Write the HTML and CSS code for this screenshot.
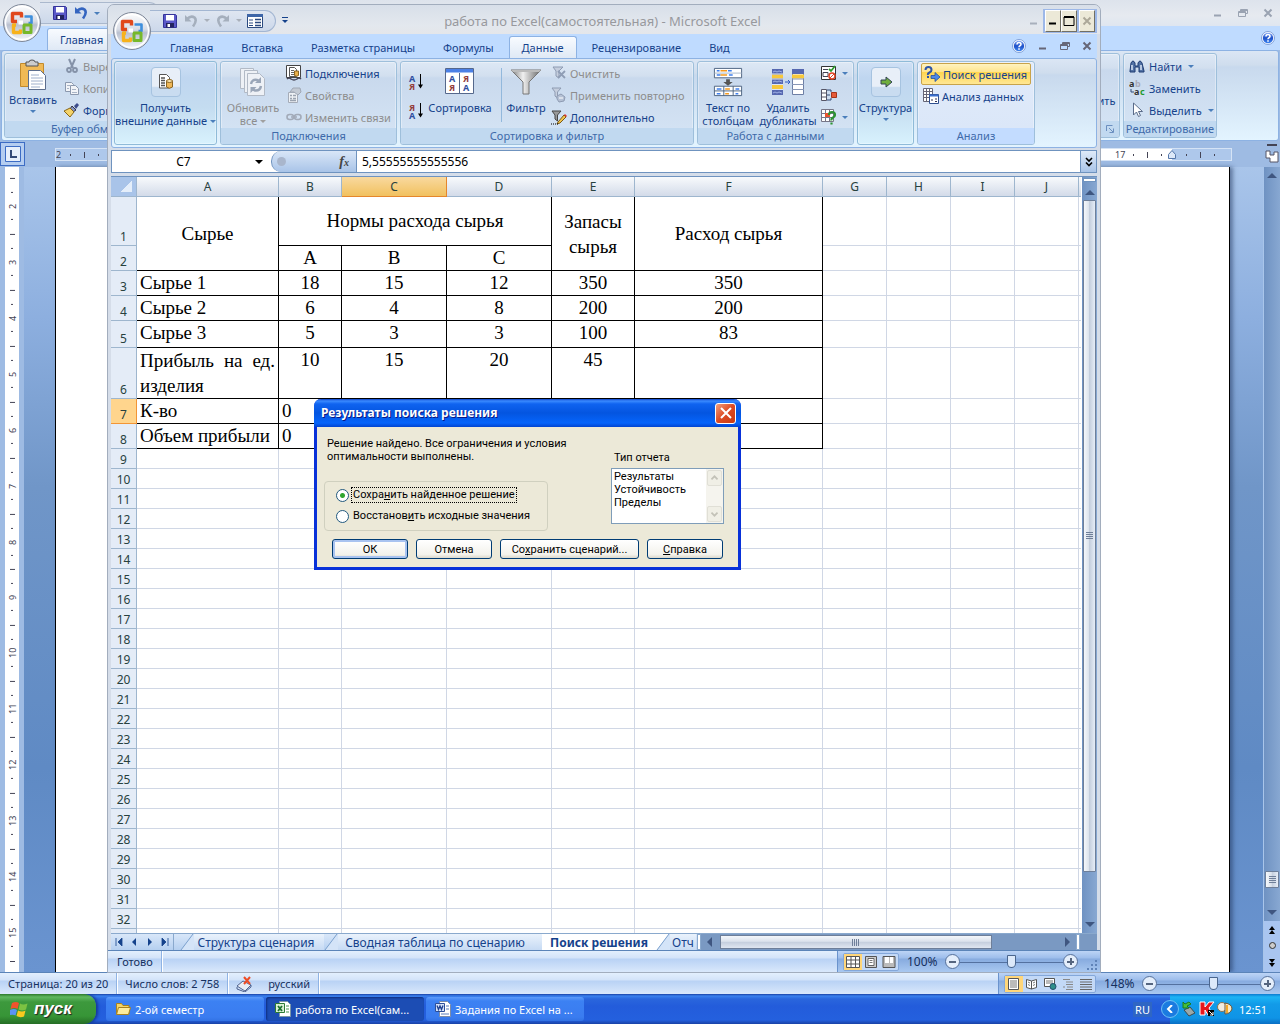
FILE: index.html
```html
<!DOCTYPE html>
<html lang="ru">
<head>
<meta charset="utf-8">
<title>Поиск решения</title>
<link rel="stylesheet" href="styles.css">
</head>
<body>
<svg class="sprite" aria-hidden="true">
  <defs>
    <linearGradient id="gOrb" x1="0" y1="0" x2="0" y2="1"><stop offset="0" stop-color="#fff"/><stop offset=".45" stop-color="#d9dde6"/><stop offset=".55" stop-color="#b9c0cf"/><stop offset="1" stop-color="#f7f9fc"/></linearGradient>
    <linearGradient id="gFunnel" x1="0" y1="0" x2="1" y2="0"><stop offset="0" stop-color="#777"/><stop offset=".4" stop-color="#f0f0f0"/><stop offset="1" stop-color="#666"/></linearGradient>
    <linearGradient id="gBall" x1="0" y1="0" x2="0" y2="1"><stop offset="0" stop-color="#7fa5f5"/><stop offset=".5" stop-color="#1e50c8"/><stop offset="1" stop-color="#3f86f0"/></linearGradient>
  </defs>
  <symbol id="office" viewBox="0 0 40 40">
    <circle cx="20" cy="20" r="18.5" fill="url(#gOrb)" stroke="#7d8798"/>
    <circle cx="20" cy="20" r="16.500" fill="none" stroke="#fff" stroke-width="1.500"/>
    <g fill="none" stroke-width="3.400" stroke-linejoin="round">
      <path d="M15 18.500h-4.500v-8h9v4" stroke="#e0481c"/>
      <path d="M22.500 13.500h7v6.500h-3" stroke="#3f8fdc" stroke-width="2.600"/>
      <path d="M14 22h-2.500v7.500h7v-3" stroke="#f7b21c"/>
      <path d="M22 22h7v7.500h-7z" stroke="#76b82a" stroke-width="3"/>
    </g>
    <path d="M16.500 17.500h4.500v4h-4.500z" fill="#fff"/>
  </symbol>
  <symbol id="save" viewBox="0 0 16 16"><path d="M1.500 1.500h12l1 1v12h-13z" fill="#5a58c8" stroke="#34349a"/><path d="M4 2h8v5.500h-8z" fill="#fff"/><path d="M4 10h8v4.500h-8z" fill="#23235e"/><path d="M5.500 11h2.500v3h-2.500z" fill="#fff"/></symbol>
  <symbol id="undo" viewBox="0 0 16 16"><path d="M2 2v6.500h6.500z" fill="currentColor"/><path d="M4 6q4-4 7.500-1.500q3 3-1.500 9" fill="none" stroke="currentColor" stroke-width="2.600"/></symbol>
  <symbol id="redo" viewBox="0 0 16 16"><path d="M14 2v6.500h-6.500z" fill="currentColor"/><path d="M12 6q-4-4-7.500-1.500q-3 3 1.500 9" fill="none" stroke="currentColor" stroke-width="2.600"/></symbol>
  <symbol id="form" viewBox="0 0 16 14"><path d="M.5.5h15v13h-15z" fill="#fff" stroke="#2b4a80"/><path d="M0 0h16v3h-16z" fill="#3e66a8"/><path d="M2 6h4M2 9h4M2 11.500h4" stroke="#2b4a80"/><path d="M8 5.500h6M8 8.500h6M8 11.500h6" stroke="#2b4a80" stroke-width="1.500"/></symbol>
  <symbol id="help" viewBox="0 0 14 14"><circle cx="7" cy="7" r="6.500" fill="#fff" stroke="#7f9fd8"/><circle cx="7" cy="7" r="5.200" fill="url(#gBall)"/><path d="M5 5.500q0-2 2-2t2 1.800q0 1-1 1.500t-1 1.400M7 9.200v1.500" fill="none" stroke="#fff" stroke-width="1.600"/></symbol>
  <symbol id="min" viewBox="0 0 10 10"><path d="M1 7.500h7" stroke="currentColor" stroke-width="2"/></symbol>
  <symbol id="restore" viewBox="0 0 10 10"><path d="M2.500 3.500v-2h7v4h-2M.5 3.500h7v5h-7zM.5 4.500h7M2.500 2.500h7" fill="none" stroke="currentColor"/></symbol>
  <symbol id="close" viewBox="0 0 10 10"><path d="M1.500 1.500l7 7M8.500 1.500l-7 7" stroke="currentColor" stroke-width="2"/></symbol>
  <symbol id="getdata" viewBox="0 0 16 16"><path d="M1.500.5h7l3 3v10.500h-10z" fill="#fff" stroke="#555"/><path d="M3 4h4M3 6.500h4M3 9h4M3 11.500h4" stroke="#555" stroke-width="1.500"/><path d="M8.500 7v6q3 2.500 6 0v-6z" fill="#efb757" stroke="#8a6420"/><ellipse cx="11.500" cy="7" rx="3" ry="1.500" fill="#fbe3ae" stroke="#8a6420"/></symbol>
  <symbol id="conn" viewBox="0 0 16 16"><path d="M.5.5h14v12h-14z" fill="#fff" stroke="#444"/><path d="M3.500 2.500h5l2 2v7h-7z" fill="#fff" stroke="#555"/><path d="M5 5.500h3M5 7.500h3M5 9.500h3" stroke="#666"/><path d="M8.500 6v4.500q2 1.500 4 0v-4.500z" fill="#e8b04c" stroke="#8a6420"/><path d="M1 14q2-2 4 0q3 2 6 0q2-2 4 0" fill="none" stroke="#445" stroke-width="1.500"/></symbol>
  <symbol id="refresh" viewBox="0 0 28 30"><g fill="#eef1f6" stroke="#b2bac6"><path d="M1.500 1.500h13v20h-13z"/><path d="M5.500 3.500h13v22h-13z"/><path d="M8.500 6.500h12l5 5v17h-17z"/></g><path d="M12 17q1-5 6-4l2 1M22 19q-1 5-6 4.500l-3-1.500" fill="none" stroke="#9aa6b8" stroke-width="2.500"/><path d="M22 10v6h-6zM11.500 26v-6h6z" fill="#9aa6b8"/></symbol>
  <symbol id="props" viewBox="0 0 16 16"><path d="M2.500 5.500h9v10h-9z" fill="#eef1f5" stroke="#a5acb8"/><path d="M4 8.500h2M4 11.500h2M7 8.500h3M7 11.500h3M4 13.500h6" stroke="#9aa3b0" stroke-width="1.500"/><path d="M4 5l3-4h7l1 4-3 3-4-3z" fill="#c3cad4" stroke="#a0a8b5"/></symbol>
  <symbol id="links" viewBox="0 0 16 16"><g fill="none" stroke="#a2aab8" stroke-width="1.600"><rect x="1" y="5.500" width="6.500" height="5" rx="2.500"/><rect x="8.500" y="5.500" width="6.500" height="5" rx="2.500"/><path d="M5 8h6"/></g></symbol>
  <symbol id="funnel" viewBox="0 0 32 28"><path d="M1 2h30l-12 12v12h-6v-12z" fill="url(#gFunnel)" stroke="#777"/><path d="M1 2h30l-2 2h-26z" fill="#bbb"/></symbol>
  <symbol id="fclear" viewBox="0 0 16 16"><path d="M2 2h10l-4 4v7l-3-2v-5z" fill="#c5cede" stroke="#8e9bb2"/><path d="M7 6l7 7M14 6l-7 7" stroke="#8f9db5" stroke-width="1.800"/></symbol>
  <symbol id="fagain" viewBox="0 0 16 16"><path d="M1 1h9l-3.500 4v6l-2.500-2v-4z" fill="#c5cede" stroke="#8e9bb2"/><path d="M6 9l4-2 4 3-1 4-5 1-2-3z" fill="#b5c1d5" stroke="#8e9bb2"/><path d="M8 11h4" stroke="#fff"/></symbol>
  <symbol id="fadv" viewBox="0 0 16 16"><path d="M1 2h9l-3.500 4v6l-2.500-2v-4z" fill="#999" stroke="#444"/><path d="M7 13l6-7 2 2-6 6-3 1z" fill="#f2c44c" stroke="#7a5a18"/><path d="M13 6l2 2 1-1-2-2z" fill="#d33"/><path d="M0 15h8" stroke="#000" stroke-dasharray="1 1"/></symbol>
  <symbol id="cols" viewBox="0 0 32 32"><g fill="#fff" stroke="#4b617f"><path d="M1.500 1.500h29v10h-29zM1.500 20.500h29v10h-29zM1.500 25.500h29M11.500 20.500v10M21.500 20.500v10"/></g><path d="M1.500 6.500h29" stroke="#a8b6ca"/><path d="M4 4h3M16 4h4M4 8.500h4M17 8.500h4" stroke="#3f80ee" stroke-width="1.500"/><path d="M8 4h7M8 8.500h7M13 23.500h5M13 28.500h4" stroke="#f59a1e" stroke-width="1.500"/><path d="M4 23.500h5M4 28.500h4M24 23.500h4M24 28.500h3" stroke="#3f80ee" stroke-width="1.500"/><path d="M14 13h4v3h3l-5 4-5-4h3z" fill="#555"/></symbol>
  <symbol id="dedupe" viewBox="0 0 34 28"><path d="M1 1h11v26h-11z" fill="#5668b0"/><path d="M1 6.500h11v4h-11zM1 17h11v4h-11z" fill="#f7c83c"/><path d="M1 6h11M1 11h11M1 16.500h11M1 21.500h11" stroke="#dfe6f5"/><path d="M2 4l2-1 2 1 2-1 3 1M2 14l2-1 2 1 2-1 3 1M2 25l2-1 2 1 2-1 3 1" fill="none" stroke="#9fb0e6"/><path d="M14 14h4M17 12l2 2-2 2" fill="none" stroke="#2d5bc4"/><path d="M21.500 1.500h11v25h-11z" fill="#fff" stroke="#6d7fa5"/><path d="M21 1h12v5h-12z" fill="#5668b0"/><path d="M21 6.500h12v4h-12z" fill="#f7c83c"/><path d="M21 11h12M21 16.500h12M21 21.500h12" stroke="#8796b6"/></symbol>
  <symbol id="valid" viewBox="0 0 16 16"><path d="M.5 1.500h14v13h-14z" fill="#fff" stroke="#333"/><path d="M2 4.500h5M2 7.500h5v4h-5z" fill="none" stroke="#445"/><path d="M8 4l2 2 4-5" fill="none" stroke="#2b9a2b" stroke-width="1.800"/><circle cx="11" cy="11" r="3" fill="#fff" stroke="#e04423" stroke-width="1.500"/><path d="M9 13l4-4" stroke="#e04423"/></symbol>
  <symbol id="consol" viewBox="0 0 16 16"><path d="M.5 2.500h5v11h-5zM.5 6h5M.5 10h5" fill="#fff" stroke="#556"/><path d="M6 3h4v2M6 13h4v-2M6 8h3" fill="none" stroke="#334a77"/><path d="M10.500 5.500h5v5h-5z" fill="#e55a38" stroke="#a5341b"/></symbol>
  <symbol id="whatif" viewBox="0 0 16 16"><path d="M.5.5h12v12h-12zM4.500.5v12M8.500.5v12M.5 4.500h12M.5 8.500h12" fill="#fff" stroke="#778"/><path d="M4 4h5v4h-5z" fill="#e8542f"/><path d="M8 6q0-3 3-3t3 3q0 1.500-2 2.500t-1.500 3M10.500 13.500v2" fill="none" stroke="#2d9332" stroke-width="2.200"/></symbol>
  <symbol id="garrow" viewBox="0 0 16 16"><path d="M3 6h5v-3l6 5-6 5v-3h-5z" fill="#6fae3e" stroke="#345"/></symbol>
  <symbol id="solver" viewBox="0 0 16 16"><path d="M1.500 4q0-3 3-3t3 3q0 1.500-2 2.500t-1.500 2.500M4 10v2" fill="none" stroke="#2f55a8" stroke-width="2"/><path d="M7 9.500h4v-3l5 4.500-5 4.500v-3h-4z" fill="#4f88e6" stroke="#2450a0" stroke-width=".8"/></symbol>
  <symbol id="analysis" viewBox="0 0 16 16"><path d="M.5.5h9v13h-9zM3.500.5v13M6.500.5v13M.5 3.500h9M.5 6.500h9M.5 9.500h9" fill="#fff" stroke="#667"/><path d="M6.500 6.500h9v9h-9z" fill="#fff" stroke="#2f4f8f"/><path d="M6.500 7.500h9" stroke="#3a6fd0" stroke-width="2"/><path d="M8 12h2M12 11h2M12 13.500h2" stroke="#335"/></symbol>
  <symbol id="paste" viewBox="0 0 28 32"><path d="M1.500 4.500h23v23h-23z" fill="#f0b955" stroke="#c28a2c"/><path d="M7 3h3q0-2 3-2t3 2h3v4h-12z" fill="#ccc" stroke="#555"/><path d="M9.500 11.500h12l5 5v14h-17z" fill="#fff" stroke="#5c6e8e"/><path d="M12 16h8M12 19h12M12 22h12M12 25h12M12 28h9" stroke="#9fb0cc"/></symbol>
  <symbol id="cut" viewBox="0 0 16 16"><path d="M5 1l4 9M11 1l-4 9" stroke="#8592a8" stroke-width="2"/><circle cx="5" cy="12" r="2" fill="none" stroke="#8592a8" stroke-width="1.800"/><circle cx="11" cy="12" r="2" fill="none" stroke="#8592a8" stroke-width="1.800"/></symbol>
  <symbol id="copy" viewBox="0 0 16 16"><g fill="#f2f4f8" stroke="#8b98ae"><path d="M1.500 2.500h6l2 2v7h-8z"/><path d="M6.500 5.500h5l3 3v6h-8z"/></g><path d="M3 5.500h3M3 8.500h2M8 9.500h4M8 12.500h5" stroke="#a9b4c6"/></symbol>
  <symbol id="brush" viewBox="0 0 16 16"><path d="M10 4l3-3 2 2-3 4z" fill="#3c4d8c"/><path d="M8 4l4 4-3 2-3-3z" fill="#8593c0" stroke="#334"/><path d="M6 6l4 4-4 5-6-6z" fill="#f5d36a" stroke="#876518"/></symbol>
  <symbol id="find" viewBox="0 0 16 16"><path d="M2 5q2-4 4 0v3h3v-3q2-4 4 0l2 8v1h-5v-5h-4v5h-5v-1z" fill="#5272a5" stroke="#1f3c72"/><path d="M3 7v5M12 7v5" stroke="#dbe6f6" stroke-width="1.500"/></symbol>
  <symbol id="cursor" viewBox="0 0 16 16"><path d="M4.500 1v12l3-3 2 4.500 2-1-2-4h4z" fill="#fff" stroke="#5b6c8a"/></symbol>
  <symbol id="launch" viewBox="0 0 8 8"><path d="M.5 6v-5.500h6M3 3l4 4M7.500 3.500v4h-4" fill="none" stroke="#6b8fc0"/></symbol>
  <symbol id="spell" viewBox="0 0 16 16"><path d="M1 10l6-5 8 4-6 6z" fill="#e8ecf4" stroke="#4f6390"/><path d="M1 11v2l8 3 6-5v-2" fill="none" stroke="#4f6390"/><path d="M8 1l6 7M14 1l-6 7" stroke="#ee4b24" stroke-width="2"/></symbol>
  <symbol id="vgrid" viewBox="0 0 14 12"><path d="M.5.5h13v11h-13zM.5 4h13M.5 8h13M5 .5v11M9.500.5v11" fill="#fff" stroke="#555"/></symbol>
  <symbol id="vpage" viewBox="0 0 14 12"><path d="M1.500.5h11v11h-11z" fill="#ccc" stroke="#555"/><path d="M4 2.500h6v7h-6z" fill="#fff" stroke="#666"/><path d="M5.500 4.500h3M5.500 6.500h3" stroke="#777"/></symbol>
  <symbol id="vbreak" viewBox="0 0 14 12"><path d="M1 .5h12v11h-12z" fill="#bbb" stroke="#555"/><path d="M3 1h4v6h-4zM8 1h3v6h-3z" fill="#fff"/></symbol>
  <symbol id="vdoc" viewBox="0 0 14 12"><path d="M1.500.5h10v11h-10z" fill="#fff" stroke="#555"/><path d="M3 3h7M3 5h7M3 7h7M3 9h7" stroke="#777"/></symbol>
  <symbol id="vread" viewBox="0 0 14 12"><path d="M1.500 1.500l5 1.500v8l-5-1.500zM11.500 1.500l-5 1.500v8l5-1.500z" fill="#fff" stroke="#555"/><path d="M3 4l2 1M3 6.500l2 1M10 4l-2 1M10 6.500l-2 1" stroke="#777"/></symbol>
  <symbol id="vweb" viewBox="0 0 14 12"><path d="M1.500.5h10v8h-10z" fill="#fff" stroke="#555"/><path d="M3 3h7M3 5h7" stroke="#777"/><circle cx="10" cy="8.500" r="3" fill="#2f8f8a" stroke="#24506f"/></symbol>
  <symbol id="voutl" viewBox="0 0 14 12"><path d="M2 1.500h7M5 4h7M5 6.500h7M2 9h2M6 9h6M5 11.500h7" stroke="#888"/></symbol>
  <symbol id="vlines" viewBox="0 0 14 12"><path d="M1 1.500h12M1 4h12M1 6.500h12M1 9h12M1 11.500h12" stroke="#666"/></symbol>
  <symbol id="flag" viewBox="0 0 18 18"><path d="M2 3q4-2 7 0l-1.500 6q-3-2-7 0z" fill="#f0532d"/><path d="M10 3.500q3 2 7.500 0l-1.500 6q-4 2-7.500 0z" fill="#7cc242"/><path d="M0 10q4-2 7 0l-1.500 5.500q-2.500-1.500-7 0z" fill="#5b93f5"/><path d="M8 10.500q4 2 7.500 0l-1.500 6q-4 1.500-7.500-.500z" fill="#fbc91f"/></symbol>
  <symbol id="folder" viewBox="0 0 16 16"><path d="M1.500 13v-10.500h5l1.500 2h6v8.500z" fill="#f5d568" stroke="#a8811f"/><path d="M1.500 13.500l2-7h12l-2 7z" fill="#fdeb9c" stroke="#a8811f"/></symbol>
  <symbol id="xls" viewBox="0 0 16 16"><path d="M4.500.5h8l3 3v12h-11z" fill="#fff" stroke="#7c98a8"/><path d="M11 5h3M11 8h3M11 11h3" stroke="#4a9850"/><path d="M.5 2.500h9v9h-9z" fill="#d9f0d4" stroke="#2c7a35"/><path d="M3 5l4 5M7 5l-4 5" stroke="#1d7030" stroke-width="1.800"/></symbol>
  <symbol id="doc" viewBox="0 0 16 16"><path d="M4.500.5h8l3 3v12h-11z" fill="#fff" stroke="#7c8ca8"/><path d="M11 5h3M11 8h3M6 13h8" stroke="#5b7dbb"/><path d="M.5 2.500h9v8h-9z" fill="#d5e2f8" stroke="#2c4f9a"/><path d="M2 4.500l1.500 4L5 5l1.500 3.500L8 4.500" fill="none" stroke="#1d3f90" stroke-width="1.300"/></symbol>
  <symbol id="device" viewBox="0 0 16 16"><path d="M3 9l6-3 5 6-6 3z" fill="#9aa8a8" stroke="#3d4a4c"/><path d="M2 1v6h6l-2-2 4-2-2-2-4 2z" fill="#47c13a" stroke="#1c7a1c"/></symbol>
  <symbol id="kav" viewBox="0 0 16 16"><path d="M1 1h5v5l4-5h5l-5 6 4 7h-5l-3-5v5h-5z" fill="#e8161b" stroke="#fff"/><path d="M9 9h6v6h-6z" fill="#000"/><path d="M10 10l4 4M14 11v3h-3" fill="none" stroke="#fff"/></symbol>
  <symbol id="shell" viewBox="0 0 16 16"><circle cx="5" cy="6" r="4.500" fill="#f1ecdf" stroke="#8b7350"/><path d="M8 2q7 1 7 6q-2 5-7 5z" fill="#f8e9c5" stroke="#6b5536"/><path d="M10 4v8" stroke="#f3a927" stroke-width="2"/></symbol>
</svg>

<main class="desktop">
  <section class="word" aria-label="Microsoft Word">
    <svg class="orb"><use href="#office"/></svg>
    <header class="word-title">
      <div class="qat word-qat">
        <button class="ico" aria-label="Сохранить"><svg class="i16"><use href="#save"/></svg></button>
        <button class="ico undo" aria-label="Отменить"><svg class="i16"><use href="#undo"/></svg></button>
        <i class="caret"></i>
      </div>
      <div class="winctl faded">
        <button class="ico" aria-label="Свернуть"><svg class="i10"><use href="#min"/></svg></button>
        <button class="ico" aria-label="Восстановить"><svg class="i10"><use href="#restore"/></svg></button>
        <button class="ico" aria-label="Закрыть"><svg class="i10"><use href="#close"/></svg></button>
      </div>
    </header>
    <nav class="tabs word-tabs">
      <button class="tab on">Главная</button>
      <button class="ico help" aria-label="Справка"><svg class="i14"><use href="#help"/></svg></button>
    </nav>
    <div class="ribbon word-ribbon">
      <div class="group clip">
        <div class="tools">
          <button class="big"><svg class="pasteico"><use href="#paste"/></svg><span>Вставить</span><i class="caret"></i></button>
          <div class="col">
            <button class="small off"><svg class="i16"><use href="#cut"/></svg>Вырезать</button>
            <button class="small off"><svg class="i16"><use href="#copy"/></svg>Копировать</button>
            <button class="small"><svg class="i16"><use href="#brush"/></svg>Формат</button>
          </div>
        </div>
        <h2 class="cap">Буфер обмена</h2>
      </div>
      <div class="group styles">
        <div class="tools"><button class="big"><span class="gap36"></span><span>Изменить</span><i class="caret"></i></button></div>
        <h2 class="cap"><svg class="i8"><use href="#launch"/></svg></h2>
      </div>
      <div class="group edit">
        <div class="tools"><div class="col">
          <button class="small"><svg class="i16"><use href="#find"/></svg>Найти<i class="caret"></i></button>
          <button class="small"><svg class="i16" viewBox="0 0 16 16"><text x="0" y="7" class="glyph dark">a</text><text x="6" y="7" class="glyph pale">b</text><text x="5" y="15" class="glyph dark">a</text><text x="11" y="15" class="glyph green">c</text><path d="M2 9v3h3" fill="none" stroke="#334a77"/></svg>Заменить</button>
          <button class="small"><svg class="i16"><use href="#cursor"/></svg>Выделить<i class="caret"></i></button>
        </div></div>
        <h2 class="cap">Редактирование</h2>
      </div>
    </div>
    <div class="hruler">
      <button class="tabstop" aria-label="Табуляция"><svg class="i16" viewBox="0 0 16 16"><path d="M.5.5h15v15h-15z" fill="#e6effb" stroke="#3c6cc4"/><path d="M6 4v7h6" fill="none" stroke="#334a77" stroke-width="2"/></svg></button>
      <div class="hscale">
        <span class="hleft">2</span>
        <span class="hnum">17</span>
        <span class="hright"><svg class="i10"><path d="M1.500 9.500v-4l3.500-4 3.500 4v4z" fill="#dce8f8" stroke="#5577aa"/></svg></span>
      </div>
      <div class="rulerbtn"><i></i><svg class="i14" viewBox="0 0 14 14"><path d="M1 1h4v4h4v-3h4v10h-8v-4h-4z" fill="#fff" stroke="#556"/></svg></div>
    </div>
    <div class="word-work">
      <div class="vruler">
        <b></b><span>2</span><span>3</span><span>4</span><span>5</span><span>6</span><span>7</span><span>8</span><span>9</span><span>10</span><span>11</span><span>12</span><span>13</span><span>14</span><span>15</span><b class="tail"></b>
      </div>
      <div class="canvas"><div class="page"></div></div>
      <div class="vbar word-bar">
        <i class="up"></i>
        <div class="track"><div class="thumb lines"></div></div>
        <i class="down"></i>
        <div class="browse"><i class="up"></i><i class="up"></i><b></b><i class="down"></i><i class="down"></i></div>
      </div>
    </div>
    <footer class="status word-status">
      <span>Страница: 20 из 20</span><span>Число слов: 2 758</span>
      <span class="lang"><svg class="i16"><use href="#spell"/></svg>русский</span>
      <div class="right">
        <div class="views">
          <button class="ico on" aria-label="Разметка"><svg class="view"><use href="#vdoc"/></svg></button>
          <button class="ico" aria-label="Чтение"><svg class="view"><use href="#vread"/></svg></button>
          <button class="ico" aria-label="Веб"><svg class="view"><use href="#vweb"/></svg></button>
          <button class="ico" aria-label="Структура"><svg class="view"><use href="#voutl"/></svg></button>
          <button class="ico" aria-label="Черновик"><svg class="view"><use href="#vlines"/></svg></button>
        </div>
        <span class="pct">148%</span>
        <button class="zoom minus" aria-label="Уменьшить"></button>
        <input class="range" type="range" min="0" max="100" value="55" aria-label="Масштаб документа">
        <button class="zoom plus" aria-label="Увеличить"></button>
      </div>
    </footer>
  </section>

  <section class="excel" aria-label="Microsoft Excel">
    <svg class="orb"><use href="#office"/></svg>
    <header class="xl-title">
      <div class="qat">
        <button class="ico" aria-label="Сохранить"><svg class="i16"><use href="#save"/></svg></button>
        <button class="ico dim" aria-label="Отменить"><svg class="i16"><use href="#undo"/></svg></button><i class="caret dim"></i>
        <button class="ico dim" aria-label="Вернуть"><svg class="i16"><use href="#redo"/></svg></button><i class="caret dim"></i>
        <button class="ico" aria-label="Форма"><svg class="i16"><use href="#form"/></svg></button>
      </div>
      <svg class="more" viewBox="0 0 6 7"><path d="M0 .5h6" stroke="#15428b"/><path d="M0 3h6l-3 3z" fill="#15428b"/></svg>
      <h1>работа по Excel(самостоятельная) - Microsoft Excel</h1>
      <svg class="i10 ghost"><use href="#min"/></svg>
      <div class="classic">
        <button aria-label="Свернуть"><svg class="i10"><use href="#min"/></svg></button>
        <button aria-label="Развернуть"><svg class="i12" viewBox="0 0 12 12"><path d="M1 2h10v8.500h-10z" fill="none" stroke="#000"/><path d="M1 2h10" stroke="#000" stroke-width="2"/></svg></button>
        <button class="x" aria-label="Закрыть"><svg class="i10"><use href="#close"/></svg></button>
      </div>
    </header>
    <nav class="tabs">
      <button class="tab">Главная</button><button class="tab">Вставка</button><button class="tab">Разметка страницы</button><button class="tab">Формулы</button><button class="tab on">Данные</button><button class="tab">Рецензирование</button><button class="tab">Вид</button>
      <div class="winctl">
        <button class="ico" aria-label="Справка"><svg class="i14"><use href="#help"/></svg></button>
        <button class="ico" aria-label="Свернуть книгу"><svg class="i10"><use href="#min"/></svg></button>
        <button class="ico" aria-label="Восстановить книгу"><svg class="i10"><use href="#restore"/></svg></button>
        <button class="ico" aria-label="Закрыть книгу"><svg class="i10"><use href="#close"/></svg></button>
      </div>
    </nav>
    <div class="ribbon">
      <div class="group folded g-get">
        <button class="big"><span class="tile"><svg class="i16"><use href="#getdata"/></svg></span><span>Получить</span><span>внешние данные<i class="caret"></i></span></button>
      </div>
      <div class="group g-conn">
        <div class="tools">
          <button class="big off"><svg class="refico"><use href="#refresh"/></svg><span>Обновить</span><span>все<i class="caret"></i></span></button>
          <div class="col">
            <button class="small"><svg class="i16"><use href="#conn"/></svg>Подключения</button>
            <button class="small off"><svg class="i16"><use href="#props"/></svg>Свойства</button>
            <button class="small off"><svg class="i16"><use href="#links"/></svg>Изменить связи</button>
          </div>
        </div>
        <h2 class="cap">Подключения</h2>
      </div>
      <div class="group g-sort">
        <div class="tools">
          <div class="azcol">
            <button class="ico" aria-label="По возрастанию"><svg class="i16" viewBox="0 0 16 16"><text x="1" y="8" class="glyph blue">А</text><text x="1" y="16" class="glyph red">Я</text><path d="M12.500 0v12" stroke="#000"/><path d="M10 10.500h5l-2.500 4z"/></svg></button>
            <button class="ico" aria-label="По убыванию"><svg class="i16" viewBox="0 0 16 16"><text x="1" y="8" class="glyph red">Я</text><text x="1" y="16" class="glyph blue">А</text><path d="M12.500 0v12" stroke="#000"/><path d="M10 10.500h5l-2.500 4z"/></svg></button>
          </div>
          <button class="big"><svg class="sortico" viewBox="0 0 30 28"><path d="M.5.5h28v25h-28z" fill="#fff" stroke="#55688c"/><path d="M1 1h27v3.500h-27z" fill="#4b80e6"/><path d="M14.500 5v20" stroke="#55688c"/><text x="4" y="14" class="glyph blue">А</text><text x="4" y="23" class="glyph red">Я</text><text x="18" y="14" class="glyph red">Я</text><text x="18" y="23" class="glyph blue">А</text></svg><span>Сортировка</span></button>
          <i class="rule"></i>
          <button class="big narrow"><svg class="funico"><use href="#funnel"/></svg><span>Фильтр</span></button>
          <div class="col">
            <button class="small off"><svg class="i16"><use href="#fclear"/></svg>Очистить</button>
            <button class="small off"><svg class="i16"><use href="#fagain"/></svg>Применить повторно</button>
            <button class="small"><svg class="i16"><use href="#fadv"/></svg>Дополнительно</button>
          </div>
        </div>
        <h2 class="cap">Сортировка и фильтр</h2>
      </div>
      <div class="group g-data">
        <div class="tools">
          <button class="big"><svg class="colico"><use href="#cols"/></svg><span>Текст по</span><span>столбцам</span></button>
          <button class="big"><svg class="dupico"><use href="#dedupe"/></svg><span>Удалить</span><span>дубликаты</span></button>
          <div class="col">
            <button class="small" aria-label="Проверка данных"><svg class="i16"><use href="#valid"/></svg><i class="caret"></i></button>
            <button class="small" aria-label="Консолидация"><svg class="i16"><use href="#consol"/></svg></button>
            <button class="small" aria-label="Анализ что-если"><svg class="i16"><use href="#whatif"/></svg><i class="caret"></i></button>
          </div>
        </div>
        <h2 class="cap">Работа с данными</h2>
      </div>
      <div class="group folded g-str">
        <button class="big"><span class="tile"><svg class="i16"><use href="#garrow"/></svg></span><span>Структура</span><i class="caret"></i></button>
      </div>
      <div class="group lit g-an">
        <div class="tools"><div class="col">
          <button class="small hot"><svg class="i16"><use href="#solver"/></svg>Поиск решения</button>
          <button class="small"><svg class="i16"><use href="#analysis"/></svg>Анализ данных</button>
        </div></div>
        <h2 class="cap">Анализ</h2>
      </div>
    </div>
    <div class="fbar">
      <input class="namebox" value="C7" aria-label="Имя"><i class="caret black"></i>
      <div class="fx"><b></b><em>f<small>x</small></em></div>
      <input class="formula" value="5,55555555555556" aria-label="Строка формул">
      <button class="expand" aria-label="Развернуть строку формул"><svg viewBox="0 0 8 10" width="8" height="10"><path d="M1 1l3 3 3-3M1 5.500l3 3 3-3" fill="none" stroke="#000" stroke-width="1.600"/></svg></button>
    </div>
    <div class="sheet">
      <div class="gridbox">
        <table>
          <colgroup><col class="ch"><col class="ca"><col class="cb"><col class="cc"><col class="cc"><col class="ce"><col class="cf"><col class="cg"><col class="cg"><col class="cg"><col class="cg"><col class="cg"></colgroup>
          <thead><tr><th class="all"></th><th>A</th><th>B</th><th class="sel">C</th><th>D</th><th>E</th><th>F</th><th>G</th><th>H</th><th>I</th><th>J</th><th></th></tr></thead>
          <tbody id="cells">
            <tr class="r1"><th>1</th><td class="k" rowspan="2">Сырье</td><td class="k" colspan="3">Нормы расхода сырья</td><td class="k w" rowspan="2">Запасы сырья</td><td class="k" rowspan="2">Расход сырья</td><td></td><td></td><td></td><td></td><td></td></tr>
            <tr class="r2"><th>2</th><td class="k">А</td><td class="k">В</td><td class="k">С</td><td></td><td></td><td></td><td></td><td></td></tr>
            <tr class="r2"><th>3</th><td class="k l">Сырье 1</td><td class="k">18</td><td class="k">15</td><td class="k">12</td><td class="k">350</td><td class="k">350</td><td></td><td></td><td></td><td></td><td></td></tr>
            <tr class="r2"><th>4</th><td class="k l">Сырье 2</td><td class="k">6</td><td class="k">4</td><td class="k">8</td><td class="k">200</td><td class="k">200</td><td></td><td></td><td></td><td></td><td></td></tr>
            <tr class="r5"><th>5</th><td class="k l">Сырье 3</td><td class="k">5</td><td class="k">3</td><td class="k">3</td><td class="k">100</td><td class="k">83</td><td></td><td></td><td></td><td></td><td></td></tr>
            <tr class="r6"><th>6</th><td class="k l j">Прибыль на ед. изделия</td><td class="k">10</td><td class="k">15</td><td class="k">20</td><td class="k">45</td><td class="k"></td><td></td><td></td><td></td><td></td><td></td></tr>
            <tr class="r2"><th class="sel">7</th><td class="k l">К-во</td><td class="k l">0</td><td class="k"></td><td class="k"></td><td class="k"></td><td class="k"></td><td></td><td></td><td></td><td></td><td></td></tr>
            <tr class="r2"><th>8</th><td class="k l">Объем прибыли</td><td class="k l">0</td><td class="k"></td><td class="k"></td><td class="k"></td><td class="k"></td><td></td><td></td><td></td><td></td><td></td></tr>
          </tbody>
        </table>
      </div>
      <div class="vbar">
        <div class="split"></div>
        <i class="up"></i>
        <div class="track"><div class="thumb lines"></div></div>
        <i class="down"></i>
      </div>
    </div>
    <div class="sheetbar">
      <div class="nav">
        <button class="ico" aria-label="Первый лист"><svg class="i8" viewBox="0 0 8 8"><path d="M1 0v8M7 0v8l-4-4z" fill="#15428b" stroke="#15428b" stroke-width=".8"/></svg></button>
        <button class="ico" aria-label="Предыдущий лист"><svg class="i8" viewBox="0 0 8 8"><path d="M6 0v8l-4-4z" fill="#15428b"/></svg></button>
        <button class="ico" aria-label="Следующий лист"><svg class="i8" viewBox="0 0 8 8"><path d="M2 0v8l4-4z" fill="#15428b"/></svg></button>
        <button class="ico" aria-label="Последний лист"><svg class="i8" viewBox="0 0 8 8"><path d="M7 0v8M1 0v8l4-4z" fill="#15428b" stroke="#15428b" stroke-width=".8"/></svg></button>
      </div>
      <div class="stabs">
        <svg class="slant" viewBox="0 0 14 16"><path d="M1 16L13 0h1v16z" fill="#d4e4f8"/><path d="M1 16L13 0" stroke="#7ba0cd"/></svg><button class="stab t1">Структура сценария</button>
        <svg class="slant" viewBox="0 0 14 16"><path d="M1 16L13 0h1v16z" fill="#d4e4f8"/><path d="M1 16L13 0" stroke="#7ba0cd"/></svg><button class="stab t2">Сводная таблица по сценарию</button>
        <button class="stab on">Поиск решения</button>
        <svg class="slant" viewBox="0 0 14 16"><path d="M0 0h13L1 16h-1z" fill="#fff"/><path d="M1 16L13 0h1v16z" fill="#d4e4f8"/><path d="M1 16L13 0" stroke="#7ba0cd"/></svg><button class="stab last">Отч</button>
      </div>
      <div class="hsplit"></div>
      <div class="hbar"><i class="left"></i><div class="hthumb"><b></b></div><i class="rightarr"></i></div>
      <div class="hsplit"></div><div class="corner"></div>
    </div>
    <footer class="status">
      <span>Готово</span>
      <div class="right">
        <div class="views">
          <button class="ico on" aria-label="Обычный"><svg class="view"><use href="#vgrid"/></svg></button>
          <button class="ico" aria-label="Разметка страницы"><svg class="view"><use href="#vpage"/></svg></button>
          <button class="ico" aria-label="Страничный режим"><svg class="view"><use href="#vbreak"/></svg></button>
        </div>
        <span class="pct">100%</span>
        <button class="zoom minus" aria-label="Уменьшить"></button>
        <input class="range" type="range" min="0" max="100" value="50" aria-label="Масштаб листа">
        <button class="zoom plus" aria-label="Увеличить"></button>
        <svg class="grip" viewBox="0 0 12 12"><path d="M9 1h2v2h-2zM9 5h2v2h-2zM9 9h2v2h-2zM5 5h2v2h-2zM5 9h2v2h-2zM1 9h2v2h-2z" fill="#5f83b8"/></svg>
      </div>
    </footer>
  </section>

  <section class="dialog" role="dialog" aria-labelledby="dt">
    <header><h2 id="dt">Результаты поиска решения</h2><button class="dx" aria-label="Закрыть"><svg viewBox="0 0 12 12" width="12" height="12"><path d="M1 1l10 10M11 1L1 11" stroke="#fff" stroke-width="2"/></svg></button></header>
    <div class="dbody">
      <div class="dmain">
        <div class="dleft">
          <p>Решение найдено. Все ограничения и условия<br>оптимальности выполнены.</p>
          <fieldset>
            <div class="opt"><input type="radio" name="r" id="o1" checked><label for="o1" class="focus">Сохра<u>н</u>ить найденное решение</label></div>
            <div class="opt"><input type="radio" name="r" id="o2"><label for="o2">Восстанов<u>и</u>ть исходные значения</label></div>
          </fieldset>
        </div>
        <div class="dright">
          <label for="rep">Тип отчета</label>
          <div class="listbox">
            <select id="rep" size="4"><option>Результаты</option><option>Устойчивость</option><option>Пределы</option></select>
            <div class="lscroll"><svg viewBox="0 0 15 15"><path d="M4 9l3.500-3.500L11 9" fill="none" stroke="#c3c2b8" stroke-width="2"/></svg><svg viewBox="0 0 15 15"><path d="M4 6l3.500 3.500L11 6" fill="none" stroke="#c3c2b8" stroke-width="2"/></svg></div>
          </div>
        </div>
      </div>
      <div class="dbtns"><button class="def">ОК</button><button>Отмена</button><button class="wide">Со<u>х</u>ранить сценарий...</button><button><u>С</u>правка</button></div>
    </div>
  </section>
</main>

<footer class="taskbar">
  <button class="start"><svg viewBox="0 0 18 18"><use href="#flag"/></svg><span>пуск</span></button>
  <div class="tasks">
    <button><svg class="i16"><use href="#folder"/></svg>2-ой семестр</button>
    <button class="on"><svg class="i16"><use href="#xls"/></svg>работа по Excel(сам...</button>
    <button><svg class="i16"><use href="#doc"/></svg>Задания по Excel на ...</button>
  </div>
  <span class="ru">RU</span>
  <div class="tray">
    <button class="chev" aria-label="Показать значки"><svg viewBox="0 0 8 8" width="8" height="8"><path d="M6 0L2 4l4 4" fill="none" stroke="#fff" stroke-width="2"/></svg></button>
    <svg class="i16"><use href="#device"/></svg><svg class="i16"><use href="#kav"/></svg><svg class="i16"><use href="#shell"/></svg>
    <time>12:51</time>
  </div>
</footer>
<script src="grid.js"></script>
</body>
</html>
```
FILE: grid.js
```js
// Adds the empty rows below the filled part of the sheet.
const body = document.getElementById('cells');
for (let n = 9; n <= 33; n++) {
  const row = document.createElement('tr');
  const label = n < 33 ? n : '';
  row.innerHTML = '<th>' + label + '</th>' + '<td></td>'.repeat(11);
  body.append(row);
}
```
FILE: styles.css
```css
* { box-sizing: border-box; }
body { margin: 0; height: 100vh; display: flex; flex-direction: column; overflow: hidden; font: 11px/13px "Noto Sans", sans-serif; color: #15428b; }
h1, h2, p { margin: 0; font-weight: normal; font-size: inherit; }
button { font: inherit; color: inherit; border: 0; padding: 0; margin: 0; background: none; white-space: nowrap; }
input { font: inherit; margin: 0; }
svg { flex: none; display: block; }
.sprite { position: absolute; width: 0; height: 0; }
.glyph { font: bold 9px "Noto Sans", sans-serif; }
.blue { fill: #2f4f9f; } .red { fill: #943c3c; } .dark { fill: #333; } .pale { fill: #aab; } .green { fill: #1f9a2f; }
.i8 { width: 8px; height: 8px; } .i10 { width: 10px; height: 10px; } .i12 { width: 12px; height: 12px; } .i14 { width: 14px; height: 14px; } .i16 { width: 16px; height: 16px; }
.ico { display: flex; align-items: center; justify-content: center; }
.caret { display: inline-block; flex: none; border: 3px solid transparent; border-top-color: #4a7ebb; border-bottom: 0; }
.caret.dim { border-top-color: #a9b0ba; }
.caret.black { border-width: 4px 4px 0; border-top-color: #000; }
.desktop { position: relative; flex: 1; min-height: 0; overflow: hidden; background: #6f97d0; }
.orb { position: absolute; width: 40px; height: 40px; z-index: 2; }

/* window chrome shared by both programs */
.qat { display: flex; align-items: center; height: 22px; gap: 5px; padding: 0 12px 0 12px; border: 1px solid #a3b6d2; border-left: 0; border-radius: 0 12px 12px 0; background: linear-gradient(#dfe6f1, #ccd8ea); }
.undo { color: #3565c0; }
.ico.dim { color: #a5afbd; }
.winctl { display: flex; align-items: center; gap: 13px; margin-left: auto; color: #667; }
.tabs { display: flex; align-items: flex-end; gap: 2px; height: 24px; background: #bfdbff; }
.tab { height: 22px; padding: 0 12px; border: 1px solid transparent; border-bottom: 0; border-radius: 3px 3px 0 0; }
.tab.on { background: linear-gradient(#f8fbff, #dfe9f5); border-color: #8db2e3; }
.ribbon { display: flex; gap: 3px; height: 90px; padding: 2px; border: 1px solid #8db2e3; border-radius: 3px; background: linear-gradient(#dbe6f4 0, #cfdded 14px, #c8d9ed 16px, #e3f4ff); }
.group { display: flex; flex-direction: column; flex: none; overflow: hidden; border: 1px solid #9ebfdb; border-radius: 3px; box-shadow: inset 0 0 0 1px rgba(255,255,255,.35); background: linear-gradient(#dde8f5 0, #d2dfef 14px, #c9d9ed 16px, #d6e5f5); }
.tools { display: flex; flex: 1; min-height: 0; }
.cap { height: 16px; line-height: 15px; text-align: center; color: #3e6aaa; background: #c1d9f0; }
.col { display: flex; flex-direction: column; }
.small { display: flex; align-items: center; gap: 3px; height: 22px; padding: 0 3px; text-align: left; }
.small .caret { margin-left: 2px; }
.off { color: #8d8d8d; }
.off .caret { border-top-color: #a0a0a0; }
.big { display: flex; flex-direction: column; align-items: center; height: 66px; width: 60px; }
.big > svg, .big > .tile, .gap36 { margin: 5px 0 4px; height: 30px; }
.big > .caret { margin-top: 4px; }
.big span > .caret { margin: 0 0 2px 3px; }
.big > .tile { display: flex; justify-content: center; align-items: center; width: 30px; border: 1px solid #a6c3e0; border-radius: 4px; background: linear-gradient(#e8eff8 65%, #c9dcf0 70%); }
.folded { align-items: center; border-color: #8fbbd8; background: linear-gradient(#cfe0f5 0, #bfd6f0 16px, #c4dcf0 55%, #d8f2fd); }
.lit { background: linear-gradient(#e2ebfa, #d9e6f8); }
.lit .cap { background: #c3dcff; }
.hot { border: 1px solid #c7a34b; border-radius: 2px; padding: 0 2px; background: linear-gradient(#fff3c0 0, #ffe58f 38%, #ffd64f 42%, #ffe795); }
.rule { width: 1px; margin: 6px 2px 6px 5px; background: #92b8dc; }

/* status bars, zoom sliders and scroll bars */
.status { display: flex; flex: none; align-items: stretch; height: 22px; color: #15305f; border-top: 1px solid #5b84b8; background: linear-gradient(#e3effd 0, #d3e3f9 7px, #b9d2f5 8px, #d9e8fb); }
.status > span { display: flex; align-items: center; padding: 0 8px; border-right: 1px solid #8fb3e4; box-shadow: 1px 0 #fff; }
.right { display: flex; align-items: center; margin-left: auto; padding-left: 5px; border-left: 1px solid #6a93cd; background: linear-gradient(#bcd4f6 0, #9dbdeb 7px, #87abdf 8px, #a9c8f0); }
.views { display: flex; height: 18px; border: 1px solid #83a7da; border-radius: 2px; background: #c3d9f7; }
.views .ico { width: 18px; }
.views .on { background: #ffd67a; }
.view { width: 14px; height: 12px; }
.pct { width: 46px; padding-left: 8px; font-size: 12px; }
.zoom { flex: none; position: relative; width: 15px; height: 15px; border: 1px solid #55709a; border-radius: 50%; background: linear-gradient(#55657f, #55657f) center / 7px 2px no-repeat, #e4eefb; }
.zoom.plus { background: linear-gradient(#55657f, #55657f) center / 7px 2px no-repeat, linear-gradient(#55657f, #55657f) center / 2px 7px no-repeat, #e4eefb; }
.range { appearance: none; width: 103px; height: 16px; background: linear-gradient(#54719f, #54719f) 0 8px / 100% 1px no-repeat; }
.range::-webkit-slider-thumb { appearance: none; width: 9px; height: 13px; border: 1px solid #4a668f; border-radius: 1px 1px 5px 5px; background: #dce9fa; }
.vbar { display: flex; flex-direction: column; align-items: center; width: 16px; flex: none; background: linear-gradient(90deg, #6f92c2, #88a8d2); }
.up, .down, .left, .rightarr { border: 5px solid transparent; width: 0; height: 0; flex: none; }
.up { border-top: 0; border-bottom-color: #3f5680; }
.down { border-bottom: 0; border-top-color: #3f5680; }
.left { border-left: 0; border-right-color: #3f5680; }
.rightarr { border-right: 0; border-left-color: #3f5680; }
.track { flex: 1; align-self: stretch; padding: 0 1px; }
.thumb { border: 1px solid #6e7f99; border-radius: 1px; background: linear-gradient(90deg, #f4f7fb, #dbe2ec 45%, #c4cedd 50%, #e6edf7); }
.lines::after { content: ""; display: block; width: 7px; height: 8px; background: repeating-linear-gradient(#6f7f99 0 1px, transparent 1px 2px); }
.lines { display: flex; align-items: center; justify-content: center; }

/* Word */
.word { position: absolute; inset: 0; display: flex; flex-direction: column; background: #9ebbe3; }
.word > .orb { left: 2px; top: 3px; }
.word-title { display: flex; align-items: center; height: 26px; padding: 0 7px 0 40px; background: linear-gradient(#dde3ec, #e6eaf0 60%, #dfe6f0); }
.word-qat { width: 120px; border-color: #aab8cd; }
.faded { color: #9aa3b2; gap: 15px; }
.word-tabs { padding: 0 5px 0 47px; }
.help { margin: 0 0 5px auto; }
.word-ribbon { margin: 0 1px; height: 91px; }
.clip { width: 174px; }
.clip .big { width: 56px; }
.clip .cap { text-align: left; padding-left: 46px; }
.big > .pasteico { width: 28px; height: 32px; margin: 4px 0 2px; }
.clip .tools, .edit .tools, .styles .tools { padding-top: 1px; }
.styles { width: 90px; margin-left: auto; align-items: flex-end; }
.styles .cap { width: 100%; display: flex; justify-content: flex-end; padding: 4px 5px; }
.edit { width: 94px; margin-right: 59px; }
.edit .small { padding-left: 5px; gap: 4px; }
.hruler { display: flex; align-items: center; height: 26px; background: #9ebbe3; }
.tabstop { width: 25px; height: 24px; border: 1px solid #3c6cc4; background: #b4cdf0; display: flex; justify-content: center; align-items: center; }
.hscale { display: flex; align-items: center; flex: 1; height: 13px; margin: 0 32px 0 30px; border: 1px solid #d5e3f5; font-size: 9px; color: #445; background: #fff; }
.hleft, .hright, .hnum { height: 11px; line-height: 11px; }
.hleft { width: 110px; background: linear-gradient(#445, #445) 14px 5px / 1px 2px no-repeat, linear-gradient(#445, #445) 28px 3px / 1px 6px no-repeat, linear-gradient(#445, #445) 42px 5px / 1px 2px no-repeat, #aec8eb; }
.hnum { margin-left: auto; width: 62px; background: linear-gradient(#445, #445) 18px 5px / 1px 2px no-repeat, linear-gradient(#445, #445) 32px 3px / 1px 6px no-repeat, linear-gradient(#445, #445) 46px 5px / 1px 2px no-repeat; }
.hnum { width: 52px; }
.hright { width: 64px; background: linear-gradient(#445, #445) 19px 5px / 1px 2px no-repeat, linear-gradient(#445, #445) 33px 3px / 1px 6px no-repeat, linear-gradient(#445, #445) 47px 5px / 1px 2px no-repeat, linear-gradient(#aec8eb, #aec8eb) 5px 0 no-repeat; }
.rulerbtn { width: 16px; display: flex; flex-direction: column; align-items: center; gap: 4px; }
.rulerbtn i { width: 10px; height: 2px; background: #445; }
.word-work { display: flex; flex: 1; min-height: 0; }
.vruler { width: 24px; display: flex; flex-direction: column; padding-left: 6px; background: linear-gradient(90deg, #9ebbe3 5px, #fff 5px 19px, #9ebbe3 19px); font-size: 9px; color: #445; }
.vruler span { flex: 56; display: flex; align-items: center; justify-content: center; width: 13px; writing-mode: vertical-rl; rotate: 180deg; background: linear-gradient(#445, #445) 50% 25% / 2px 1px no-repeat, linear-gradient(#445, #445) 50% 75% / 2px 1px no-repeat, linear-gradient(#445, #445) 50% 100% / 5px 1px no-repeat; }
.vruler b { height: 11px; width: 13px; }
.vruler .tail { background: linear-gradient(#445, #445) 50% 0 / 5px 1px no-repeat; }
.canvas { flex: 1; display: flex; padding: 0 33px 0 31px; background: linear-gradient(#a9c5ea 0, #8dafdf 150px, #7096c8 320px, #5f8ac4 600px, #6a94d0); }
.page { flex: 1; background: #fff; border: solid #000; border-width: 0 1px; box-shadow: 3px 0 4px rgba(30,50,90,.5); }
.word-bar { width: 17px; border-left: 1px solid #a9c5ea; }
.word-bar > .up { margin: 6px 0; }
.word-bar .track { display: flex; flex-direction: column; justify-content: flex-end; }
.word-bar .thumb { height: 17px; margin-bottom: 22px; }
.word-bar > .down { margin-bottom: 6px; }
.browse { align-self: stretch; height: 51px; display: flex; flex-direction: column; align-items: center; padding-top: 5px; background: #a9c5f0; }
.browse .up, .browse .down { border-width: 0 3px 4px; border-bottom-color: #000; }
.browse .down { border-width: 4px 3px 0; border-top-color: #000; }
.browse b { width: 7px; height: 7px; margin: 8px 0 10px; border: 1px solid #333; border-radius: 50%; background: #ccc; }
.lang { gap: 16px; }
.word-status .right { padding-right: 5px; }

/* Excel */
.excel { position: absolute; left: 107px; right: 179px; top: 4px; bottom: 21px; display: flex; flex-direction: column; padding: 0 3px; border: 1px solid #a2adbd; border-radius: 7px 7px 0 0; background: #d5dde9; }
.excel > .orb { left: 4px; top: 6px; }
.xl-title { display: flex; align-items: center; flex: none; height: 29px; margin: 0 -3px; padding: 2px 3px 0 42px; border-radius: 6px 6px 0 0; background: linear-gradient(#d8dfe9, #e3e8ee 70%, #e4e6ea); }
.more { width: 6px; height: 7px; margin-left: 6px; }
.xl-title h1 { flex: 1; padding-right: 112px; text-align: center; font-size: 13px; line-height: 16px; color: #98999d; }
.ghost { color: #a8b0bc; margin-right: 4px; }
.classic { display: flex; padding: 1px 2px; height: 24px; background: #9db8e8; }
.classic button { width: 16px; display: flex; align-items: center; justify-content: center; background: #ece9d8; border: 1px solid; border-color: #fff #716f64 #716f64 #fff; color: #000; }
.classic .x { margin-left: 2px; color: #aca899; }
.tabs { flex: none; }
.excel .tabs { padding: 0 5px 0 46px; }
.excel .winctl { gap: 12px; height: 24px; }
.excel .ribbon { flex: none; }
.g-get { width: 103px; } .g-conn { width: 177px; } .g-sort { width: 294px; } .g-data { width: 157px; } .g-str { width: 57px; } .g-an { width: 118px; padding: 0; }
.folded .big { width: 100%; padding-top: 0; }
.g-conn .tools { padding-left: 2px; }
.refico { width: 28px; }
.azcol { display: flex; flex-direction: column; gap: 13px; padding: 12px 0 0 7px; }
.g-sort .big { width: 72px; }
.sortico { width: 30px; } .funico { width: 32px; } .colico { width: 32px; } .dupico { width: 34px; }
.g-sort .narrow { width: 44px; }
.g-an .col { flex: 1; padding: 1px 3px; }
.g-an .small { padding: 0 2px; }
.fbar { display: flex; flex: none; height: 23px; margin-top: 2px; border: 1px solid #6f93bf; background: #fff; align-items: stretch; color: #000; font-size: 12px; }
.fbar .caret { align-self: center; }
.namebox { width: 143px; border: 0; padding: 0; text-align: center; background: none; }
.fx { display: flex; justify-content: space-between; align-items: center; width: 86px; margin-left: 8px; padding: 0 7px 0 5px; border: 1px solid #6f93bf; border-width: 0 1px 0 1px; border-radius: 10px 0 0 10px; background: linear-gradient(#d9e6f7, #a9c4e8); }
.fx b { width: 9px; height: 9px; border-radius: 50%; background: #a9b6cc; }
.fx em { font: italic bold 14px "Liberation Serif", serif; color: #444; }
.fx small { font-size: 10px; }
.formula { flex: 1; border: 0; padding: 0 5px; background: none; }
.expand { width: 16px; display: flex; align-items: center; justify-content: center; border-left: 1px solid #6f93bf; background: linear-gradient(#dfeaf8, #a9c4e8); }
.sheet { display: flex; flex: 1; min-height: 0; margin-top: 3px; border-top: 1px solid #6f93bf; }
.gridbox { flex: 1; overflow: hidden; background: #fff; }
table { table-layout: fixed; width: 1032px; border-collapse: separate; border-spacing: 0; color: #000; }
.ch { width: 26px; } .ca { width: 142px; } .cb { width: 63px; } .cc { width: 105px; } .ce { width: 83px; } .cf { width: 188px; } .cg { width: 64px; }
th, td { padding: 0; border: solid #d0d7e5; border-width: 0 1px 1px 0; font: 19px/24px "Liberation Serif", serif; text-align: center; vertical-align: bottom; }
th { font: 12px/16px "Noto Sans", sans-serif; border-color: #9eb6ce; color: #27413e; background: #e4ecf7; }
tr { height: 20px; }
thead th { line-height: 18px; background: linear-gradient(#f8fafc, #d3dbe9); }
thead .all { background: linear-gradient(135deg, transparent 50%, #e4eefa 50%) 10px 4px / 11px 11px no-repeat, #a9c4e9; }
thead .sel { background: linear-gradient(#f9d99f, #f1c15f); border-color: #e5862c; }
tbody .sel { background: #ffd58d; border-color: #f29536; }
.k { border-color: #000; vertical-align: middle; }
.w, .j { line-height: 25px; }
.l { text-align: left; padding: 0 3px; white-space: nowrap; }
.j { text-align: justify; white-space: normal; }
.r1 { height: 49px; } .r2 { height: 25px; } .r5 { height: 27px; } .r6 { height: 51px; }
.r5 td, .r6 td { vertical-align: top; }
.sheet .vbar { border-left: 1px solid #fff; }
.split { width: 13px; height: 4px; margin: 1px 0 8px; border: 1px solid #6f93bf; background: #fff; }
.sheet .up { margin-bottom: 5px; }
.sheet .thumb { height: calc(100% - 50px); }
.sheet .down { margin-bottom: 6px; }
.sheetbar { display: flex; flex: none; height: 17px; border-top: 1px solid #8aa9cd; background: linear-gradient(#d9e7f9, #b5cff0); }
.nav { display: flex; justify-content: space-around; width: 63px; border-right: 1px solid #8aa9cd; }
.stabs { display: flex; width: 523px; padding-left: 6px; overflow: hidden; font-size: 12px; }
.slant { width: 14px; height: 16px; }
.stab { flex: none; background: linear-gradient(#eaf2fc, #c6daf4); }
.t1 { width: 130px; padding-right: 6px; } .t2 { width: 204px; padding-right: 10px; }
.stab.on { width: 114px; background: #fff; font-weight: bold; }
.last { padding: 0 2px; }
.hsplit { width: 4px; border: 1px solid #8aa9cd; background: #fff; }
.hbar { flex: 1; display: flex; align-items: center; background: #7a99c2; }
.left { margin: 0 8px 0 6px; }
.hthumb { width: 272px; height: 14px; display: flex; justify-content: center; align-items: center; border: 1px solid #6e7f99; background: linear-gradient(#f4f7fb, #dbe2ec 45%, #c4cedd 50%, #dfe6f0); }
.hthumb b { width: 8px; height: 7px; background: repeating-linear-gradient(90deg, #6f7f99 0 1px, transparent 1px 2px); }
.rightarr { margin: 0 6px 0 auto; }
.corner { width: 17px; background: #7a99c2; }
.excel .status { margin: 0 -3px; padding-left: 1px; }
.grip { width: 12px; height: 12px; margin: 6px 2px 0 8px; }

/* results dialog */
.dialog { position: absolute; left: 314px; top: 399px; width: 427px; font: 11px/13px Roboto, sans-serif; color: #000; border: 3px solid #0831d9; border-top: 0; border-radius: 7px 7px 0 0; background: #ece9d8; }
.dialog header { display: flex; align-items: center; justify-content: space-between; height: 28px; margin: 0 -3px; padding: 0 5px 0 7px; border-radius: 7px 7px 0 0; background: linear-gradient(#0a3fc8 0, #3a8bff 2px, #0f63f0 5px, #0455e0 14px, #0564fb 24px, #0144d0); }
.dialog h2 { font: bold 12px/16px "Noto Sans", sans-serif; color: #fff; text-shadow: 1px 1px #0a1883; }
.dx { width: 21px; height: 21px; display: flex; align-items: center; justify-content: center; border: 1px solid #fff; border-radius: 3px; background: linear-gradient(135deg, #f0a080, #dd4a22 50%, #c73a14); }
.dbody { padding: 10px 14px 8px 7px; }
.dmain { display: flex; justify-content: space-between; }
.dleft p { padding-left: 3px; white-space: nowrap; }
fieldset { display: flex; flex-direction: column; gap: 5px; width: 224px; height: 50px; margin: 18px 0 0; padding: 5px 0 0 11px; border: 1px solid #d0d0bf; border-radius: 4px; min-width: 0; }
.opt { display: flex; align-items: center; gap: 2px; white-space: nowrap; }
.opt input { appearance: none; flex: none; width: 13px; height: 13px; border: 1px solid #21597f; border-radius: 50%; background: #fff; }
.opt input:checked { background: radial-gradient(circle, #2fa52f 2px, #fff 3px); }
.opt label { padding: 0 1px; height: 16px; border: 1px solid transparent; }
.opt .focus { border: 1px dotted #000; }
.dright { display: flex; flex-direction: column; gap: 4px; padding-top: 14px; width: 113px; }
.dright label { padding-left: 3px; }
.listbox { display: flex; height: 56px; border: 1px solid #7f9db9; background: #fff; }
select { flex: 1; min-width: 0; border: 0; padding: 1px 0; font: inherit; color: #000; background: none; overflow: hidden; }
option { padding: 0 2px; height: 13px; min-height: 13px; line-height: 13px; }
.lscroll { width: 17px; display: flex; flex-direction: column; justify-content: space-between; padding: 1px; background: #f5f4ee; }
.lscroll svg { width: 15px; height: 16px; border: 1px solid #e0dfd6; border-radius: 2px; background: #f0efe6; }
.dbtns { display: flex; gap: 8px; margin-top: 8px; padding-left: 8px; }
.dbtns button { width: 76px; height: 20px; border: 1px solid #003c74; border-radius: 3px; background: linear-gradient(#fff, #f3f2ec 80%, #dcd8cc); }
.dbtns .wide { width: 139px; }
.dbtns .def { box-shadow: inset 0 0 0 2px #a9c3f0; }

/* taskbar */
.taskbar { display: flex; flex: none; align-items: stretch; height: 30px; color: #fff; background: linear-gradient(#1941a5 0, #3a81ee 2px, #2a66dd 5px, #235cdb 12px, #2460de 26px, #1941a5); }
.start { display: flex; align-items: center; gap: 6px; width: 96px; padding-left: 10px; border-radius: 0 12px 12px 0; background: linear-gradient(#2c7a2c 0, #5fb85f 3px, #3d993d 8px, #379537 22px, #256d25); font: italic bold 17px "Liberation Sans", sans-serif; text-shadow: 1px 1px 1px #222; box-shadow: 2px 0 3px #14389a; }
.start svg { width: 18px; height: 18px; overflow: visible; }
.tasks { display: flex; flex: 1; gap: 2px; padding: 3px 0 3px 10px; }
.tasks button { display: flex; align-items: center; gap: 4px; width: 158px; padding-left: 9px; border-radius: 3px; background: linear-gradient(#5d9bfa 0, #3c81f3 4px, #3a7cf0 20px, #3272e4); }
.tasks .on { background: #1c4db4; box-shadow: inset 1px 1px 2px #0f2f80; }
.ru { align-self: center; padding: 1px 2px; background: #2f66c4; }
.tray { display: flex; align-items: center; gap: 2px; width: 110px; margin-left: 18px; background: linear-gradient(#0b7bd0 0, #1cb4f5 3px, #129be8 10px, #0f94e6 24px, #0a6fc4); }
.chev { width: 18px; height: 18px; margin-left: -9px; display: flex; align-items: center; justify-content: center; border: 1px solid #6cc0f5; border-radius: 50%; background: #1b7be0; }
.tray time { margin-left: 4px; }
```
